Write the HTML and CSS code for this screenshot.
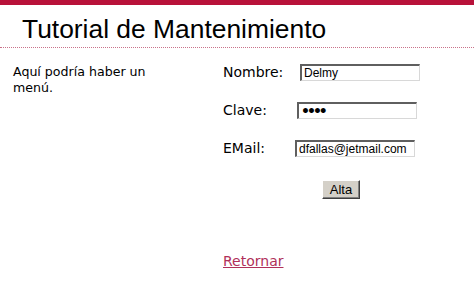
FILE: index.html
```html
<!DOCTYPE html>
<html lang="es">
<head>
<meta charset="utf-8">
<title>Tutorial de Mantenimiento</title>
<link rel="stylesheet" href="styles.css">
</head>
<body>
<div class="topbar"></div>
<header class="header">
  <h1 class="title">Tutorial de Mantenimiento</h1>
</header>
<main class="main">
  <aside class="menu">Aquí podría haber un menú.</aside>
  <form class="form">
    <div class="row">
      <label class="lbl lbl-nombre" for="nombre">Nombre:</label>
      <input class="field" id="nombre" type="text" value="Delmy">
    </div>
    <div class="row">
      <label class="lbl lbl-clave" for="clave">Clave:</label>
      <input class="field field-pass" id="clave" type="password" value="abcd">
    </div>
    <div class="row">
      <label class="lbl lbl-email" for="email">EMail:</label>
      <input class="field" id="email" type="text" value="dfallas@jetmail.com">
    </div>
    <div class="actions">
      <button class="btn" type="button">Alta</button>
    </div>
    <a class="back" href="#">Retornar</a>
  </form>
</main>
</body>
</html>
```

FILE: styles.css
```css
html, body {
  margin: 0;
  padding: 0;
  background: #ffffff;
}

body {
  font-family: "DejaVu Sans", Verdana, sans-serif;
  color: #000000;
}

.topbar {
  height: 5px;
  background: #b8123a;
}

.header {
  padding: 9px 0 3px 22px;
  border-bottom: 1px dotted #c9728a;
}

.title {
  margin: 0;
  font-family: "Liberation Sans", Arial, sans-serif;
  font-weight: normal;
  font-size: 26.4px;
  line-height: 30px;
  color: #000000;
}

.main {
  display: grid;
  grid-template-columns: 210px 1fr;
  padding-top: 15px;
}

.menu {
  padding: 1px 50px 0 13px;
  font-size: 12.6px;
  line-height: 16px;
}

.form {
  display: flex;
  flex-direction: column;
  align-items: flex-start;
  padding-left: 13px;
}

.row {
  display: flex;
  align-items: center;
  height: 18px;
}

.row + .row {
  margin-top: 20px;
}

.lbl {
  font-size: 14px;
  line-height: 17px;
}

.lbl-nombre { width: 77px; }
.lbl-clave { width: 74px; }
.lbl-email { width: 72px; }

.field {
  box-sizing: border-box;
  width: 120px;
  height: 17px;
  margin: 0;
  padding: 0 2px;
  font-family: "Liberation Sans", Arial, sans-serif;
  font-size: 12px;
  color: #000000;
  background: #ffffff;
  border-style: solid;
  border-width: 2px 1px 1px 2px;
  border-color: #5f5f5f #d8d8d8 #d8d8d8 #5f5f5f;
  outline: none;
}

.field-pass {
  font-family: "DejaVu Sans", Verdana, sans-serif;
  font-size: 14px;
  font-weight: bold;
  letter-spacing: -3px;
}

.actions {
  margin-top: 22px;
  padding-left: 99px;
}

.btn {
  box-sizing: border-box;
  width: 38px;
  height: 19px;
  margin: 0;
  padding: 0;
  font-family: "Liberation Sans", Arial, sans-serif;
  font-size: 13px;
  color: #000000;
  background: #d4d0c8;
  border-style: solid;
  border-width: 1px;
  border-color: #ffffff #404040 #404040 #ffffff;
  box-shadow: inset -1px -1px 0 #808080;
}

.back {
  margin-top: 54px;
  font-size: 14px;
  line-height: 17px;
  color: #b0305a;
  text-decoration: underline;
}
```
